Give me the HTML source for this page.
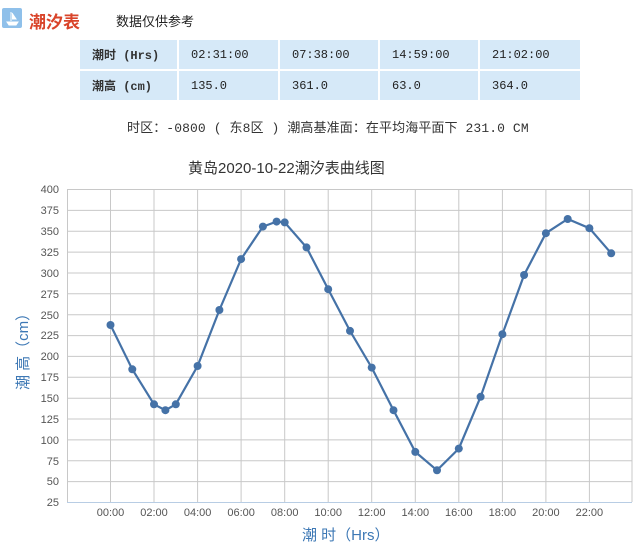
<!DOCTYPE html>
<html><head><meta charset="utf-8"><style>
body{margin:0;width:638px;height:543px;background:#fff;position:relative;overflow:hidden;font-family:"Liberation Sans","Noto Sans CJK SC",sans-serif;}
.a{position:absolute;white-space:nowrap}
table{position:absolute;left:78px;top:38px;border-collapse:collapse;table-layout:fixed;width:502px;}
td{background:#d6e9f8;border:2px solid #fff;height:29px;padding:0 0 0 12px;font-family:"Liberation Mono","Noto Sans CJK SC",monospace;font-size:12px;color:#222;}
td.h{font-weight:bold;padding-left:12px;color:#333;}
</style></head><body>
<div class="a" style="left:2px;top:8px;width:20px;height:20px;background:#8fc0ea;border-radius:2px"></div>
<svg class="a" style="left:2px;top:8px" width="20" height="20"><path d="M9 4V13M10 5L14 11H10M5 14H16L14 17H7Z" fill="#fff" stroke="#fff" stroke-width="1"/></svg>
<div class="a" style="left:29px;top:8px;font-size:17px;color:#d9442a;font-weight:bold;font-family:'Noto Sans CJK SC',sans-serif">潮汐表</div>
<div class="a" style="left:116px;top:11px;font-size:13px;color:#222">数据仅供参考</div>
<table>
<colgroup><col style="width:99px"><col style="width:101px"><col style="width:100px"><col style="width:100px"><col style="width:102px"></colgroup>
<tr><td class="h">潮时 (Hrs)</td><td>02:31:00</td><td>07:38:00</td><td>14:59:00</td><td>21:02:00</td></tr>
<tr><td class="h">潮高 (cm)</td><td>135.0</td><td>361.0</td><td>63.0</td><td>364.0</td></tr>
</table>
<div class="a" style="left:127px;top:117px;font-size:13px;color:#333;font-family:'Liberation Mono','Noto Sans CJK SC',monospace;letter-spacing:0.1px">时区：-0800 ( 东8区 ) 潮高基准面：在平均海平面下 231.0 CM</div>
<svg class="a" style="left:0;top:0" width="638" height="543" font-family="Liberation Sans,Noto Sans CJK SC,sans-serif">
<text x="188" y="173" font-size="15" fill="#333">黄岛2020-10-22潮汐表曲线图</text>
<g stroke="#c8c8c8" stroke-width="1">
<line x1="67" x2="632" y1="189.5" y2="189.5"/><line x1="67" x2="632" y1="210.4" y2="210.4"/><line x1="67" x2="632" y1="231.2" y2="231.2"/><line x1="67" x2="632" y1="252.1" y2="252.1"/><line x1="67" x2="632" y1="273" y2="273"/><line x1="67" x2="632" y1="293.8" y2="293.8"/><line x1="67" x2="632" y1="314.7" y2="314.7"/><line x1="67" x2="632" y1="335.6" y2="335.6"/><line x1="67" x2="632" y1="356.4" y2="356.4"/><line x1="67" x2="632" y1="377.3" y2="377.3"/><line x1="67" x2="632" y1="398.2" y2="398.2"/><line x1="67" x2="632" y1="419" y2="419"/><line x1="67" x2="632" y1="439.9" y2="439.9"/><line x1="67" x2="632" y1="460.8" y2="460.8"/><line x1="67" x2="632" y1="481.6" y2="481.6"/>
<line y1="189" y2="502" x1="67.5" x2="67.5"/><line y1="189" y2="502" x1="110.5" x2="110.5"/><line y1="189" y2="502" x1="154" x2="154"/><line y1="189" y2="502" x1="197.6" x2="197.6"/><line y1="189" y2="502" x1="241.1" x2="241.1"/><line y1="189" y2="502" x1="284.7" x2="284.7"/><line y1="189" y2="502" x1="328.2" x2="328.2"/><line y1="189" y2="502" x1="371.7" x2="371.7"/><line y1="189" y2="502" x1="415.3" x2="415.3"/><line y1="189" y2="502" x1="458.8" x2="458.8"/><line y1="189" y2="502" x1="502.4" x2="502.4"/><line y1="189" y2="502" x1="545.9" x2="545.9"/><line y1="189" y2="502" x1="589.4" x2="589.4"/><line y1="189" y2="502" x1="632" x2="632"/>
</g>
<line x1="67" x2="632" y1="502.5" y2="502.5" stroke="#b8cde4"/>
<g font-size="11" fill="#555" text-anchor="end">
<text x="59" y="193">400</text><text x="59" y="214">375</text><text x="59" y="235">350</text><text x="59" y="256">325</text><text x="59" y="277">300</text><text x="59" y="298">275</text><text x="59" y="319">250</text><text x="59" y="339">225</text><text x="59" y="360">200</text><text x="59" y="381">175</text><text x="59" y="402">150</text><text x="59" y="423">125</text><text x="59" y="444">100</text><text x="59" y="465">75</text><text x="59" y="485">50</text><text x="59" y="506">25</text>
</g>
<g font-size="11" fill="#555" text-anchor="middle">
<text x="110.5" y="516">00:00</text><text x="154" y="516">02:00</text><text x="197.6" y="516">04:00</text><text x="241.1" y="516">06:00</text><text x="284.7" y="516">08:00</text><text x="328.2" y="516">10:00</text><text x="371.7" y="516">12:00</text><text x="415.3" y="516">14:00</text><text x="458.8" y="516">16:00</text><text x="502.4" y="516">18:00</text><text x="545.9" y="516">20:00</text><text x="589.4" y="516">22:00</text>
</g>
<text x="302" y="540" font-size="15" fill="#3d78b5">潮 时（Hrs）</text>
<text transform="translate(28,390) rotate(-90)" font-size="15" fill="#3d78b5">潮 高（cm）</text>
<polyline fill="none" stroke="#4572a7" stroke-width="2.2" points="110.5,325 132.3,369.3 154,404.3 165.4,410.2 175.8,404.3 197.6,366 219.4,310 241.1,259.1 262.9,226.6 276.6,221.6 284.7,222.4 306.5,247.4 328.2,289.2 350,330.9 371.7,367.6 393.5,410.2 415.3,451.9 437,470.3 458.8,448.6 480.6,396.8 502.4,334.2 524.1,275 545.9,233.2 567.7,219 589.4,228.2 611.2,253.3"/>
<g fill="#4572a7">
<circle cx="110.5" cy="325" r="4"/><circle cx="132.3" cy="369.3" r="4"/><circle cx="154" cy="404.3" r="4"/><circle cx="165.4" cy="410.2" r="4"/><circle cx="175.8" cy="404.3" r="4"/><circle cx="197.6" cy="366" r="4"/><circle cx="219.4" cy="310" r="4"/><circle cx="241.1" cy="259.1" r="4"/><circle cx="262.9" cy="226.6" r="4"/><circle cx="276.6" cy="221.6" r="4"/><circle cx="284.7" cy="222.4" r="4"/><circle cx="306.5" cy="247.4" r="4"/><circle cx="328.2" cy="289.2" r="4"/><circle cx="350" cy="330.9" r="4"/><circle cx="371.7" cy="367.6" r="4"/><circle cx="393.5" cy="410.2" r="4"/><circle cx="415.3" cy="451.9" r="4"/><circle cx="437" cy="470.3" r="4"/><circle cx="458.8" cy="448.6" r="4"/><circle cx="480.6" cy="396.8" r="4"/><circle cx="502.4" cy="334.2" r="4"/><circle cx="524.1" cy="275" r="4"/><circle cx="545.9" cy="233.2" r="4"/><circle cx="567.7" cy="219" r="4"/><circle cx="589.4" cy="228.2" r="4"/><circle cx="611.2" cy="253.3" r="4"/>
</g>
</svg>
</body></html>
